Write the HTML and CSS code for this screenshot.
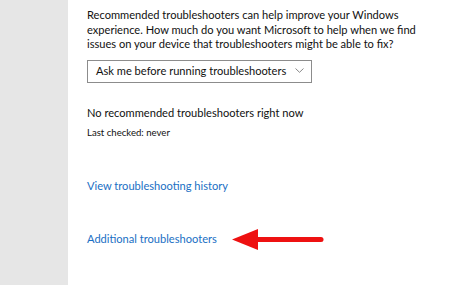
FILE: index.html
```html
<!DOCTYPE html>
<html lang="en">
<head>
<meta charset="utf-8">
<title>Troubleshoot</title>
<link rel="stylesheet" href="styles.css">
</head>
<body>
<div class="page">
  <aside class="sidebar"></aside>
  <main class="content">
    <p class="intro">Recommended troubleshooters can help improve your Windows experience. How much do you want Microsoft to help when we find issues on your device that troubleshooters might be able to fix?</p>
    <div class="select">
      <span class="select-label">Ask me before running troubleshooters</span>
      <svg class="chevron" width="9" height="5" viewBox="0 0 9 5"><path d="M0.5 0.5 L4.5 4.3 L8.5 0.5" fill="none" stroke="#7a7a7a" stroke-width="0.9"/></svg>
    </div>
    <p class="status">No recommended troubleshooters right now</p>
    <p class="checked">Last checked: never</p>
    <a class="link history" href="#">View troubleshooting history</a>
    <div class="link-row">
      <a class="link" href="#">Additional troubleshooters</a>
      <svg class="arrow" width="94" height="24" viewBox="0 0 94 24"><polygon points="0,11.5 26,1 26,22" fill="#ee1111"/><line x1="24" y1="11.5" x2="89" y2="11.5" stroke="#ee1111" stroke-width="5" stroke-linecap="round"/></svg>
    </div>
  </main>
</div>
</body>
</html>
```
FILE: styles.css
```css
html, body {
  margin: 0;
  padding: 0;
  background: #ffffff;
}
body {
  font-family: Lato, "Liberation Sans", sans-serif;
  color: #111111;
  width: 474px;
  height: 285px;
  overflow: hidden;
}
.page {
  display: flex;
  height: 285px;
}
.sidebar {
  width: 68px;
  flex: none;
  background: #e6e6e6;
}
.content {
  padding: 8.4px 0 0 19px;
  display: flex;
  flex-direction: column;
  align-items: flex-start;
}
.intro {
  margin: 0;
  width: 340px;
  font-size: 11.1px;
  line-height: 14.5px;
}
.select {
  margin-top: 8.1px;
  box-sizing: border-box;
  width: 225px;
  height: 23px;
  border: 1px solid #8c8c8c;
  display: flex;
  align-items: center;
  justify-content: space-between;
  padding: 0 7px 0 8px;
  font-size: 11.1px;
  line-height: 14.5px;
  white-space: nowrap;
}
.chevron {
  display: block;
  margin-top: -2px;
}
.status {
  margin: 23px 0 0;
  font-size: 11.1px;
  line-height: 14.5px;
}
.checked {
  margin: 6px 0 0;
  font-size: 9.6px;
  line-height: 13px;
}
.link {
  color: #1a6fc4;
  text-decoration: none;
  font-size: 11.1px;
  line-height: 14.5px;
}
.history {
  margin-top: 40px;
}
.link-row {
  margin-top: 31.5px;
  display: flex;
  align-items: center;
  gap: 15px;
}
.arrow {
  display: block;
  margin-top: 3px;
}
```
